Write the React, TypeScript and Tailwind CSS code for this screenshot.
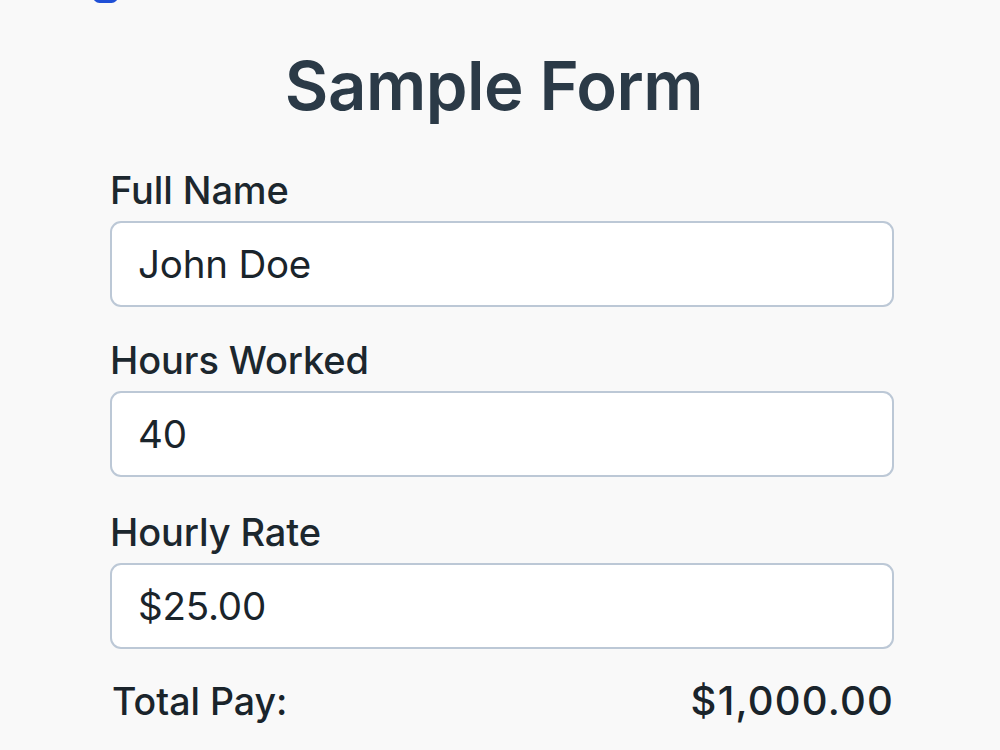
import React from "react";

const font = { fontFamily: "Inter, 'Noto Sans', sans-serif" };

function Field({ label, value, className }: { label: string; value: string; className?: string }) {
  return (
    <div className={"flex flex-col " + (className ?? "")}>
      <label className="text-[38px] leading-[44px] font-medium text-[#1c272e] tracking-[-0.1px]">{label}</label>
      <div className="mt-[9px] h-[86px] rounded-[11px] border-2 border-[#bcc8d6] bg-white flex items-center pl-[26px]">
        <span className="text-[38.5px] leading-[44px] text-[#1a242b] tracking-[-0.2px]">{value}</span>
      </div>
    </div>
  );
}

export default function App() {
  return (
    <div className="relative w-[1000px] h-[750px] overflow-hidden bg-[#f9f9f9]" style={font}>
      <div className="absolute left-[93px] top-[-10px] w-[25px] h-[13px] rounded-full bg-[#1f4fd6]" />
      <div className="flex flex-col pl-[110px] pr-[106px] pt-[51px]">
        <h1 className="text-center text-[67px] leading-[70px] font-semibold text-[#2b3a47] tracking-[-0.5px] pr-[16px]">
          Sample Form
        </h1>
        <Field label="Full Name" value="John Doe" className="mt-[47px]" />
        <Field label="Hours Worked" value="40" className="mt-[31px]" />
        <Field label="Hourly Rate" value="$25.00" className="mt-[33px]" />
        <div className="mt-[30px] flex justify-between items-baseline leading-[44px] font-medium text-[#1a242b]">
          <span className="pl-[2px] text-[37.5px]">Total Pay:</span>
          <span className="text-[40px] tracking-[1.2px]">$1,000.00</span>
        </div>
      </div>
    </div>
  );
}
